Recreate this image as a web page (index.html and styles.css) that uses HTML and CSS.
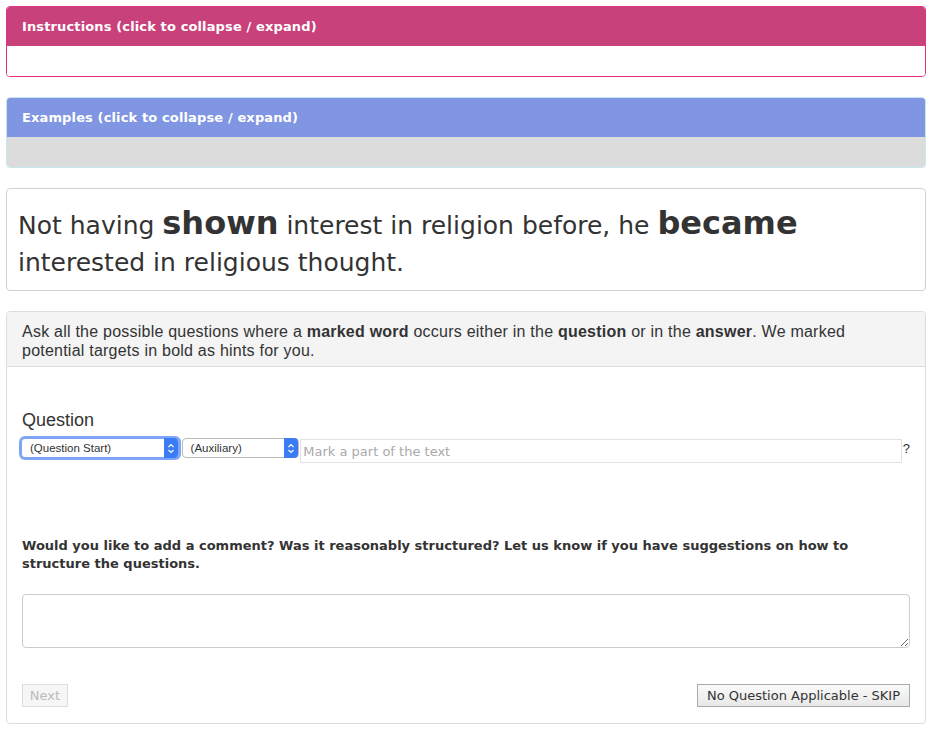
FILE: index.html
```html
<!DOCTYPE html>
<html>
<head>
<meta charset="utf-8">
<link rel="stylesheet" href="styles.css">
</head>
<body>
<div class="page">
  <div class="panel panel-instr">
    <div class="panel-head">Instructions (click to collapse / expand)</div>
    <div class="panel-body"></div>
  </div>
  <div class="panel panel-ex">
    <div class="panel-head">Examples (click to collapse / expand)</div>
    <div class="panel-body"></div>
  </div>
  <div class="panel panel-sent">
    <p class="sentence">Not having <b>shown</b> interest in religion before, he <b>became</b> interested in religious thought.</p>
  </div>
  <div class="panel panel-task">
    <div class="task-head">Ask all the possible questions where a <b>marked word</b> occurs either in the <b>question</b> or in the <b>answer</b>. We marked potential targets in bold as hints for you.</div>
    <div class="task-body">
      <h3 class="q-title">Question</h3>
      <div class="q-row">
        <div class="sel sel-start focused"><span>(Question Start)</span><i class="arrows"><svg width="8" height="11" viewBox="0 0 8 11"><path d="M1.5 4 L4 1.5 L6.5 4 M1.5 7 L4 9.5 L6.5 7" fill="none" stroke="#fff" stroke-width="1.2"/></svg></i></div>
        <div class="sel sel-aux"><span>(Auxiliary)</span><i class="arrows"><svg width="8" height="11" viewBox="0 0 8 11"><path d="M1.5 4 L4 1.5 L6.5 4 M1.5 7 L4 9.5 L6.5 7" fill="none" stroke="#fff" stroke-width="1.2"/></svg></i></div>
        <div class="mark">Mark a part of the text</div>
        <span class="qmark">?</span>
      </div>
      <p class="comment-label">Would you like to add a comment? Was it reasonably structured? Let us know if you have suggestions on how to structure the questions.</p>
      <textarea class="comment"></textarea>
      <div class="actions">
        <button class="btn-next" disabled>Next</button>
        <button class="btn-skip">No Question Applicable - SKIP</button>
      </div>
    </div>
  </div>
</div>
</body>
</html>
```
FILE: styles.css
```css
* { box-sizing: border-box; }
html, body { margin: 0; padding: 0; background: #fff; }
body { font-family: "Liberation Sans", Arial, sans-serif; color: #333; }
.page { width: 920px; margin-left: 6px; padding-top: 6px; display: flex; flex-direction: column; gap: 20px; }
.panel { border: 1px solid #ddd; border-radius: 4px; overflow: hidden; }
.panel-head { height: 39px; padding: 0 15px; display: flex; align-items: center; font-family: "DejaVu Sans", Verdana, sans-serif; font-weight: bold; font-size: 13px; letter-spacing: 0.13px; color: #fff; }
.panel-body { height: 30px; }
.panel-instr { border-color: #e4317f; }
.panel-instr .panel-head { background: #c9417b; border-bottom: 1px solid #c9417b; }
.panel-instr .panel-body { background: #fff; height: 30px; }
.panel-ex { border-color: #c6e8ee; }
.panel-ex .panel-head { background: #8096e2; }
.panel-ex .panel-body { background: #dcdcdc; }
.panel-sent { border-color: #d2d2d2; padding: 16px 10px 12px 11px; height: 103px; }
.sentence { margin: 0; font-family: "DejaVu Sans", Verdana, sans-serif; font-size: 25px; line-height: 37px; color: #333; }
.sentence b { font-size: 32px; }
.panel-task { border-color: #ddd; height: 413px; }
.task-head { background: #f4f4f4; border-bottom: 1px solid #ddd; padding: 10px 15px 8px 15px; font-size: 16px; letter-spacing: 0.23px; line-height: 19px; height: 55px; }
.task-body { padding: 0 15px; }
.q-title { margin: 43px 0 0 0; font-size: 18px; font-weight: normal; line-height: 20px; }
.q-row { display: flex; align-items: flex-start; margin-top: 8px; margin-left: -1px; height: 26px; }
.sel { position: relative; height: 20px; background: #fff; border: 1px solid #bbb; border-radius: 4px; font-size: 11.5px; display: flex; align-items: center; padding-left: 8px; margin-top: 0; }
.sel-start { width: 158px; }
.sel-aux { width: 118px; margin-left: 3px; }
.sel.focused { box-shadow: 0 0 0 2px #7fa6f4; border-color: #7fa6f4; }
.arrows { position: absolute; right: 0; top: -1px; bottom: -1px; width: 14px; background: #3b7cf5; border-radius: 0 4px 4px 0; display: flex; align-items: center; justify-content: center; }
.mark { width: 603px; height: 24px; margin-left: 1px; margin-top: 1px; border: 1px solid #e2e2e2; font-family: "DejaVu Sans", Verdana, sans-serif; font-size: 13px; color: #aaa; padding: 4px 0 0 2px; }
.qmark { font-size: 13px; margin-left: 1px; margin-top: 3px; color: #333; }
.comment-label { margin: 73px 0 0 0; font-family: "DejaVu Sans", Verdana, sans-serif; font-weight: bold; font-size: 13px; line-height: 18px; color: #333; }
.comment { display: block; width: 888px; height: 54px; margin-top: 21px; border: 1px solid #ccc; border-radius: 4px; resize: vertical; }
.actions { display: flex; justify-content: space-between; align-items: flex-end; margin-top: 36px; }
.btn-next { width: 46px; height: 23px; font-family: "DejaVu Sans", Verdana, sans-serif; font-size: 13px; color: #bbb; background: #f6f6f6; border: 1px solid #ddd; padding: 0; }
.btn-skip { width: 213px; height: 23px; font-family: "DejaVu Sans", Verdana, sans-serif; font-size: 13px; color: #333; background: linear-gradient(#fafafa, #e8e8e8); border: 1px solid #a9a9a9; padding: 0; }
```
